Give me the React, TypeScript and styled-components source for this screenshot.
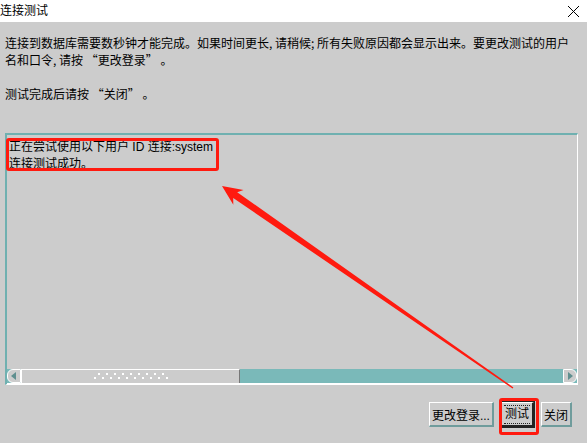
import React from 'react'
import styled, {createGlobalStyle} from 'styled-components'

const GlobalStyle = createGlobalStyle`
  html, body {
    margin: 0;
    padding: 0;
    background: #cccccc;
  }
  body {
    font-family: "Liberation Sans", "Noto Sans CJK SC", sans-serif;
    font-size: 12px;
    color: #000;
  }
`

const Dialog = styled.div`
  position: relative;
  width: 587px;
  height: 443px;
  background: #cccccc;
  overflow: hidden;
  display: flex;
  flex-direction: column;
`

const TitleBar = styled.div`
  height: 22px;
  background: #ffffff;
  display: flex;
  align-items: center;
  justify-content: space-between;
  padding: 0 7px 0 0;
  font-size: 12px;
  line-height: 22px;
`

const CloseBtn = styled.div`
  width: 14px;
  height: 14px;
  display: flex;
  align-items: center;
  justify-content: center;
`

const Body = styled.div`
  flex: 1;
  display: flex;
  flex-direction: column;
  padding: 0 9px 0 5px;
`

const Message = styled.p`
  margin: 12px 0 0 0;
  height: 68px;
  font-family: "Noto Sans CJK SC", sans-serif;
  line-height: 17px;
  white-space: pre;
`

const OutputBox = styled.div`
  margin-top: 31px;
  height: 252px;
  box-sizing: border-box;
  border-top: 2px solid #6fb0b0;
  border-left: 2px solid #6fb0b0;
  border-right: 1px solid #ffffff;
  border-bottom: 1px solid #ffffff;
  display: flex;
  flex-direction: column;
`

const OutputText = styled.div`
  flex: 1;
  padding: 4px 2px 2px;
  line-height: 17px;
  white-space: nowrap;
`

const ScrollBar = styled.div`
  height: 14px;
  display: flex;
  background: #7ab9b9;
  border-bottom: 1px solid #ffffff;
`

const ArrowBtn = styled.div<{$side: 'left' | 'right'}>`
  width: 14px;
  height: 14px;
  box-sizing: border-box;
  background: #cccccc;
  border: 1px solid #ffffff;
  border-radius: ${p => (p.$side === 'left' ? '6px 0 0 6px' : '0 6px 6px 0')};
  display: flex;
  align-items: center;
  justify-content: center;
`

const Thumb = styled.div`
  width: 219px;
  height: 14px;
  box-sizing: border-box;
  background: #cccccc;
  border-top: 1px solid #ffffff;
  border-left: 1px solid #ffffff;
  border-right: 1px solid #777;
  display: flex;
  align-items: center;
  justify-content: center;
`

const Grip = styled.div`
  width: 74px;
  height: 7px;
  background-image: radial-gradient(circle at 1px 1px, #ffffff 1px, transparent 1.2px),
  radial-gradient(circle at 1px 1px, #ffffff 1px, transparent 1.2px);
  background-size: 8px 7px, 8px 7px;
  background-position: 4px 0, 0 4px;
  background-repeat: repeat-x;
`

const Track = styled.div`
  flex: 1;
`

const ButtonRow = styled.div`
  display: flex;
  justify-content: flex-end;
  gap: 7px;
  margin-top: 17px;
  padding-right: 6px;
`

const Button = styled.div<{$def?: boolean}>`
  height: 25px;
  box-sizing: border-box;
  padding: 0 2px;
  background: #cccccc;
  border-top: 1px solid #ffffff;
  border-left: 1px solid #ffffff;
  border-right: 2px solid ${p => (p.$def ? '#222' : '#6f9c9c')};
  border-bottom: 2px solid ${p => (p.$def ? '#222' : '#6f9c9c')};
  outline: ${p => (p.$def ? '1px solid #222' : 'none')};
  display: flex;
  align-items: center;
  font-size: 12px;
  white-space: nowrap;
`

const FocusLabel = styled.span`
  border-top: 1px dotted #222;
  border-bottom: 1px dotted #222;
  line-height: 17px;
  padding: 0 1px;
`

const Annot = styled.div<{$x: number; $y: number; $w: number; $h: number}>`
  position: absolute;
  left: ${p => p.$x}px;
  top: ${p => p.$y}px;
  width: ${p => p.$w}px;
  height: ${p => p.$h}px;
  box-sizing: border-box;
  border: 3px solid #ff1a0f;
  border-radius: 3px;
  pointer-events: none;
`

const ArrowLayer = styled.svg`
  position: absolute;
  left: 0;
  top: 0;
  pointer-events: none;
`

const App = () => {
    return (
        <Dialog>
            <GlobalStyle/>
            <TitleBar>
                <span>连接测试</span>
                <CloseBtn>
                    <svg width="13" height="13" viewBox="0 0 13 13">
                        <path d="M1 1L12 12M12 1L1 12" stroke="#000" strokeWidth="1"/>
                    </svg>
                </CloseBtn>
            </TitleBar>
            <Body>
                <Message>
                    {'连接到数据库需要数秒钟才能完成。如果时间更长, 请稍候; 所有失败原因都会显示出来。要更改测试的用户\n名和口令, 请按 “更改登录” 。\n\n测试完成后请按 “关闭” 。'}
                </Message>
                <OutputBox>
                    <OutputText>
                        <div>正在尝试使用以下用户 ID 连接:system</div>
                        <div>连接测试成功。</div>
                    </OutputText>
                    <ScrollBar>
                        <ArrowBtn $side="left">
                            <svg width="6" height="8" viewBox="0 0 6 8"><path d="M5 0L0 4L5 8Z" fill="#5f8f8f"/></svg>
                        </ArrowBtn>
                        <Thumb><Grip/></Thumb>
                        <Track/>
                        <ArrowBtn $side="right">
                            <svg width="6" height="8" viewBox="0 0 6 8"><path d="M1 0L6 4L1 8Z" fill="#5f8f8f"/></svg>
                        </ArrowBtn>
                    </ScrollBar>
                </OutputBox>
                <ButtonRow>
                    <Button>更改登录...</Button>
                    <Button $def><FocusLabel>测试</FocusLabel></Button>
                    <Button>关闭</Button>
                </ButtonRow>
            </Body>
            <Annot $x={6} $y={138} $w={213} $h={33}/>
            <Annot $x={499} $y={398} $w={40} $h={37}/>
            <ArrowLayer width="587" height="443" viewBox="0 0 587 443">
                <path d="M222 186 L243.5 190 L237.2 192.2 L513.4 387.4 L512.6 388.6 L233.2 198 L233.3 204.8 Z"
                      fill="#ff1a0f"/>
            </ArrowLayer>
        </Dialog>
    )
}

export default App
